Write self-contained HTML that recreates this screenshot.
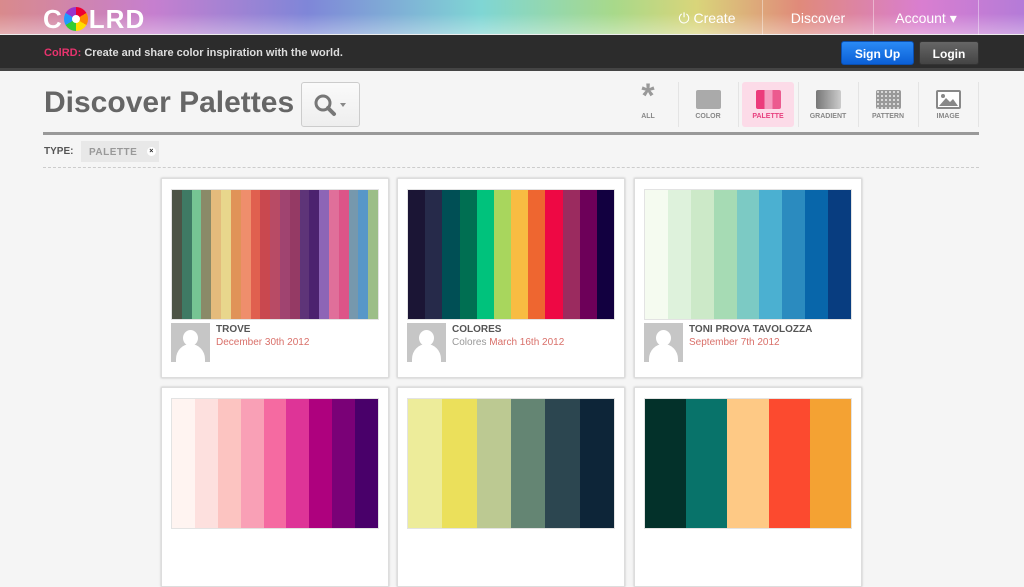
<!DOCTYPE html>
<html><head><meta charset="utf-8"><style>
*{margin:0;padding:0;box-sizing:border-box}
body{width:1024px;height:505px;overflow:hidden;background:#f5f5f5;font-family:"Liberation Sans",Arial,sans-serif;position:relative}
.top{position:absolute;left:0;top:0;width:1024px;height:35px;background:linear-gradient(90deg,#d98a8c 0%,#c67fcf 15%,#7f86d8 30%,#7fd6d4 47%,#a8d98a 60%,#d9d57a 68%,#e08a7a 78%,#d97ed0 90%,#b47bd8 100%);border-bottom:1px solid #eee}
.top:after{content:"";position:absolute;left:0;top:0;right:0;bottom:0;background:linear-gradient(#fff0 40%,#ffffff55)}
.logo{position:absolute;left:43px;top:4px;font-weight:bold;font-size:26px;color:#fff;letter-spacing:1px;z-index:2}
.wheel{display:inline-block;width:24px;height:24px;border-radius:50%;background:conic-gradient(#e03 0 60deg,#f80 60deg 120deg,#fd0 120deg 180deg,#3c3 180deg 240deg,#29f 240deg 300deg,#93c 300deg);vertical-align:-3px;position:relative;margin:0 1px}
.wheel:after{content:"";position:absolute;left:8px;top:8px;width:8px;height:8px;border-radius:50%;background:#fff}
.nav{position:absolute;top:0;height:35px;color:#fff;font-size:14px;line-height:36px;text-align:center;z-index:2}
.dv{position:absolute;top:0;width:1px;height:35px;background:#ffffff66;z-index:2}
.bar{position:absolute;left:0;top:35px;width:1024px;height:36px;background:#2c2c2c;border-bottom:3px solid #444}
.bar p{position:absolute;left:44px;top:12px;font-size:11px;font-weight:bold;color:#ddd}
.bar p b{color:#e8336e}
.btn{position:absolute;top:6px;height:24px;border-radius:3px;color:#fff;font-size:12px;font-weight:bold;text-align:center;line-height:24px}
h1{position:absolute;left:44px;top:86px;font-size:30px;color:#666;font-weight:bold}
.search{position:absolute;left:301px;top:82px;width:59px;height:45px;border:1px solid #ccc;border-radius:3px;background:linear-gradient(#fafafa,#eee)}
.line{position:absolute;left:43px;top:132px;width:936px;height:3px;background:#999}
.f{position:absolute;top:82px;width:52px;height:45px;text-align:center;font-size:7px;font-weight:bold;color:#888}
.f i{display:block;margin:8px auto 4px;width:25px;height:19px;border-radius:2px}
.fd{position:absolute;top:82px;width:1px;height:45px;background:#e4e4e4}
.type{position:absolute;left:44px;top:146px;font-size:10px;font-weight:bold;color:#555}
.tag{position:absolute;left:81px;top:141px;width:78px;height:21px;background:#e8e8e8;font-size:10px;font-weight:bold;color:#999;padding:6px 8px;letter-spacing:.5px}
.tag span{position:absolute;right:3px;top:6px;width:9px;height:9px;border-radius:50%;background:#fff;color:#222;font-size:7px;line-height:9px;text-align:center}
.dash{position:absolute;left:43px;top:167px;width:936px;border-top:1px dashed #ccc}
.card{position:absolute;width:228px;height:200px;background:#fff;box-shadow:0 0 2px #bbb;border:1px solid #ddd}
.pal{position:absolute;left:9px;top:10px;width:208px;height:131px;display:flex;border:1px solid #e3e3e3}
.pal div{flex:1}
.av{position:absolute;left:9px;top:144px;width:39px;height:39px;background:#c6c6c6;overflow:hidden}
.av:before{content:"";position:absolute;left:12px;top:7px;width:15px;height:16px;border-radius:50%;background:#fff}
.av:after{content:"";position:absolute;left:5px;top:21px;width:29px;height:30px;border-radius:50% 50% 0 0;background:#fff}
.tt{position:absolute;left:54px;top:145px;font-size:10px;font-weight:bold;color:#555}
.dt{position:absolute;left:54px;top:158px;font-size:10px;color:#d9706a}
.dt span{color:#999}
</style></head><body>
<div class="top"></div>
<div class="logo">C<span class="wheel"></span>LRD</div>
<div class="nav" style="left:652px;width:110px">⏻ Create</div>
<div class="dv" style="left:762px"></div>
<div class="nav" style="left:763px;width:110px">Discover</div>
<div class="dv" style="left:873px"></div>
<div class="nav" style="left:874px;width:104px">Account ▾</div>
<div class="dv" style="left:978px"></div>
<div class="bar"><p><b>ColRD:</b> Create and share color inspiration with the world.</p>
<div class="btn" style="left:841px;width:73px;background:linear-gradient(#2a8af5,#0b5fd6);border:1px solid #0a4fb0">Sign Up</div>
<div class="btn" style="left:919px;width:60px;background:linear-gradient(#666,#444);border:1px solid #333">Login</div></div>
<h1>Discover Palettes</h1>
<div class="search"><svg width="59" height="45" viewBox="0 0 59 45"><circle cx="21" cy="20" r="7" fill="none" stroke="#777" stroke-width="3"/><line x1="26" y1="25" x2="32" y2="31" stroke="#777" stroke-width="4" stroke-linecap="round"/><path d="M38 20h6l-3 4z" fill="#888"/></svg></div>
<div class="line"></div>
<div class="f" style="left:622px"><div style="font-size:34px;color:#999;line-height:28px;height:31px">*</div>ALL</div>
<div class="fd" style="left:678px"></div>
<div class="f" style="left:682px"><i style="background:#aaa"></i>COLOR</div>
<div class="fd" style="left:738px"></div>
<div class="f" style="left:742px;background:#fcdbe8;border-radius:3px;color:#e8407f"><i style="background:linear-gradient(90deg,#ec3a7b 33%,#f59cc0 33% 66%,#ec5a8f 66%)"></i>PALETTE</div>
<div class="fd" style="left:798px"></div>
<div class="f" style="left:802px"><i style="background:linear-gradient(90deg,#777,#ccc)"></i>GRADIENT</div>
<div class="fd" style="left:858px"></div>
<div class="f" style="left:862px"><i style="background:#999 radial-gradient(#ddd 1px,transparent 1.2px) 0 0/4px 4px"></i>PATTERN</div>
<div class="fd" style="left:918px"></div>
<div class="f" style="left:922px"><i style="background:#fff;border:2px solid #888"><svg width="21" height="15"><path d="M1 14L8 6l4 4 3-3 5 7z" fill="#888"/><circle cx="5" cy="4" r="2" fill="#888"/></svg></i>IMAGE</div>
<div class="fd" style="left:978px"></div>
<div class="type">TYPE:</div>
<div class="tag">PALETTE<span>×</span></div>
<div class="dash"></div>

<div class="card" style="left:161px;top:178px"><div class="pal"><div style="background:#4d5446"></div><div style="background:#3f7a64"></div><div style="background:#76c493"></div><div style="background:#8a8a68"></div><div style="background:#e4bb7c"></div><div style="background:#e8d68c"></div><div style="background:#e09358"></div><div style="background:#ef8e6c"></div><div style="background:#e0604f"></div><div style="background:#c9484f"></div><div style="background:#b84b65"></div><div style="background:#a04470"></div><div style="background:#953a64"></div><div style="background:#5e3478"></div><div style="background:#4c226f"></div><div style="background:#8d65b6"></div><div style="background:#e06f9a"></div><div style="background:#dd5488"></div><div style="background:#7698ad"></div><div style="background:#5797c8"></div><div style="background:#9cbe88"></div></div><div class="av"></div><div class="tt">TROVE</div><div class="dt">December 30th 2012</div></div>

<div class="card" style="left:397px;top:178px"><div class="pal"><div style="background:#1b1535"></div><div style="background:#262a4a"></div><div style="background:#004f55"></div><div style="background:#006f52"></div><div style="background:#00c27c"></div><div style="background:#a8d65d"></div><div style="background:#f8bc42"></div><div style="background:#ee6630"></div><div style="background:#ee0844"></div><div style="background:#9b2b5f"></div><div style="background:#6d0059"></div><div style="background:#120040"></div></div><div class="av"></div><div class="tt">COLORES</div><div class="dt"><span>Colores</span> March 16th 2012</div></div>

<div class="card" style="left:634px;top:178px"><div class="pal"><div style="background:#f5fbf0"></div><div style="background:#def2dc"></div><div style="background:#cce9c8"></div><div style="background:#a6dbb4"></div><div style="background:#7ccac4"></div><div style="background:#4bb0d1"></div><div style="background:#2b8bbf"></div><div style="background:#0866aa"></div><div style="background:#083d80"></div></div><div class="av"></div><div class="tt">TONI PROVA TAVOLOZZA</div><div class="dt">September 7th 2012</div></div>

<div class="card" style="left:161px;top:387px"><div class="pal"><div style="background:#fff4f1"></div><div style="background:#fde0de"></div><div style="background:#fcc4c1"></div><div style="background:#f9a0b6"></div><div style="background:#f56aa1"></div><div style="background:#de3497"></div><div style="background:#ae017e"></div><div style="background:#7a0177"></div><div style="background:#49006a"></div></div></div>

<div class="card" style="left:397px;top:387px"><div class="pal"><div style="background:#edec9a"></div><div style="background:#ebe05b"></div><div style="background:#bcc992"></div><div style="background:#648573"></div><div style="background:#2c4650"></div><div style="background:#0d2538"></div></div></div>

<div class="card" style="left:634px;top:387px"><div class="pal"><div style="background:#03312a"></div><div style="background:#08736a"></div><div style="background:#fec985"></div><div style="background:#fc4a2f"></div><div style="background:#f4a233"></div></div></div>
</body></html>
